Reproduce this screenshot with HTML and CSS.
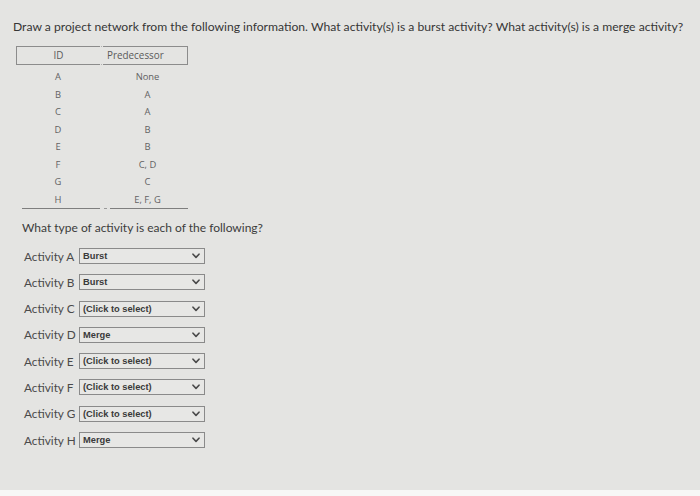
FILE: index.html
```html
<!DOCTYPE html>
<html lang="en">
<head>
<meta charset="utf-8">
<title>Project network question</title>
<link rel="stylesheet" href="styles.css">
</head>
<body>
<div class="page">
  <main class="content">
    <p class="title">Draw a project network from the following information. What activity(s) is a burst activity? What activity(s) is a merge activity?</p>

    <div class="table">
      <div class="thead">
        <div class="th th-id">ID</div>
        <div class="th-gap"></div>
        <div class="th th-pred">Predecessor</div>
      </div>
      <div class="tbody">
        <div class="tr"><span class="td-id">A</span><span class="td-pred">None</span></div>
        <div class="tr"><span class="td-id">B</span><span class="td-pred">A</span></div>
        <div class="tr"><span class="td-id">C</span><span class="td-pred">A</span></div>
        <div class="tr"><span class="td-id">D</span><span class="td-pred">B</span></div>
        <div class="tr"><span class="td-id">E</span><span class="td-pred">B</span></div>
        <div class="tr"><span class="td-id">F</span><span class="td-pred">C, D</span></div>
        <div class="tr"><span class="td-id">G</span><span class="td-pred">C</span></div>
        <div class="tr"><span class="td-id">H</span><span class="td-pred">E, F, G</span></div>
      </div>
      <div class="tfoot">
        <span class="rule rule-id"></span>
        <span class="rule-dash"></span>
        <span class="rule rule-pred"></span>
      </div>
    </div>

    <p class="question">What type of activity is each of the following?</p>

    <div class="activities">
      <div class="act"><span class="act-label">Activity A</span><div class="select"><span class="sel-text">Burst</span><svg class="chev" viewBox="0 0 8 6" width="8" height="6"><polyline points="1,1.2 4,4.4 7,1.2"/></svg></div></div>
      <div class="act"><span class="act-label">Activity B</span><div class="select"><span class="sel-text">Burst</span><svg class="chev" viewBox="0 0 8 6" width="8" height="6"><polyline points="1,1.2 4,4.4 7,1.2"/></svg></div></div>
      <div class="act"><span class="act-label">Activity C</span><div class="select"><span class="sel-text">(Click to select)</span><svg class="chev" viewBox="0 0 8 6" width="8" height="6"><polyline points="1,1.2 4,4.4 7,1.2"/></svg></div></div>
      <div class="act"><span class="act-label">Activity D</span><div class="select"><span class="sel-text">Merge</span><svg class="chev" viewBox="0 0 8 6" width="8" height="6"><polyline points="1,1.2 4,4.4 7,1.2"/></svg></div></div>
      <div class="act"><span class="act-label">Activity E</span><div class="select"><span class="sel-text">(Click to select)</span><svg class="chev" viewBox="0 0 8 6" width="8" height="6"><polyline points="1,1.2 4,4.4 7,1.2"/></svg></div></div>
      <div class="act"><span class="act-label">Activity F</span><div class="select"><span class="sel-text">(Click to select)</span><svg class="chev" viewBox="0 0 8 6" width="8" height="6"><polyline points="1,1.2 4,4.4 7,1.2"/></svg></div></div>
      <div class="act"><span class="act-label">Activity G</span><div class="select"><span class="sel-text">(Click to select)</span><svg class="chev" viewBox="0 0 8 6" width="8" height="6"><polyline points="1,1.2 4,4.4 7,1.2"/></svg></div></div>
      <div class="act"><span class="act-label">Activity H</span><div class="select"><span class="sel-text">Merge</span><svg class="chev" viewBox="0 0 8 6" width="8" height="6"><polyline points="1,1.2 4,4.4 7,1.2"/></svg></div></div>
    </div>
  </main>
  <div class="bottom-strip"></div>
</div>
</body>
</html>
```

FILE: styles.css
```css
* { box-sizing: border-box; }

html, body {
  margin: 0;
  padding: 0;
}

body {
  background: #e4e4e2;
  font-family: Lato, "Open Sans", "Liberation Sans", sans-serif;
  color: #3c3c3c;
}

.page {
  width: 700px;
  height: 496px;
  display: flex;
  flex-direction: column;
  overflow: hidden;
}

.content {
  flex: 1;
  padding: 20px 0 0 13px;
  background: #e4e4e2;
}

.bottom-strip {
  height: 6px;
  background: #f7f7f6;
}

.title {
  margin: 0;
  font-size: 12.15px;
  line-height: 14px;
  color: #363636;
  white-space: nowrap;
}

/* table */
.table {
  margin: 12px 0 0 3px;
  width: 172px;
  font-family: "Open Sans", "Liberation Sans", sans-serif;
  font-size: 9.4px;
  color: #626262;
}

.thead {
  display: grid;
  grid-template-columns: 84px 3px 85px;
  height: 19px;
}

.th {
  border-top: 1px solid #8c8c8c;
  border-bottom: 1px solid #8c8c8c;
  line-height: 17px;
  font-size: 9.9px;
  color: #5a5a5a;
}

.th-id {
  border-left: 1px solid #8c8c8c;
  text-align: center;
}

.th-pred {
  border-right: 1px solid #8c8c8c;
  padding-left: 4px;
}

.th-gap {
  border-top: 1px solid #b0b0b0;
  border-bottom: 1px solid #b0b0b0;
  margin: 0 1px;
}

.tbody {
  margin-top: 3px;
}

.tr {
  display: grid;
  grid-template-columns: 84px 3px 85px;
  height: 17.5px;
  line-height: 17.5px;
}

.td-id {
  text-align: center;
  grid-column: 1;
}

.td-pred {
  grid-column: 3;
  text-align: center;
  padding-left: 4px;
}

.tfoot {
  display: flex;
  align-items: flex-start;
  margin-left: 6px;
  height: 1px;
}

.rule {
  height: 1px;
  background: #7e7e7e;
}

.rule-id { width: 78px; }
.rule-dash { width: 4px; height: 1px; background: #9a9a9a; margin: 0 3px 0 4px; }
.rule-pred { width: 78px; }

.question {
  margin: 12px 0 0 9px;
  font-size: 12px;
  line-height: 14px;
  color: #3c3c3c;
}

/* activities */
.activities {
  margin: 13px 0 0 11px;
  display: flex;
  flex-direction: column;
  gap: 10.3px;
}

.act {
  display: flex;
  align-items: center;
  gap: 2px;
  height: 16px;
}

.act-label {
  font-size: 11.8px;
  color: #4a4a4a;
  width: 53px;
  white-space: nowrap;
}

.select {
  width: 126px;
  height: 16px;
  border: 1px solid #8a8a8a;
  background: #e7e7e5;
  display: flex;
  align-items: center;
  justify-content: space-between;
  padding: 0 4px 0 3px;
}

.sel-text {
  font-family: "Liberation Sans", Arial, sans-serif;
  font-weight: bold;
  font-size: 9.3px;
  color: #3a3a3a;
}

.chev {
  display: block;
}

.chev polyline {
  fill: none;
  stroke: #4a4a4a;
  stroke-width: 1.6;
  stroke-linecap: round;
  stroke-linejoin: round;
}
```
